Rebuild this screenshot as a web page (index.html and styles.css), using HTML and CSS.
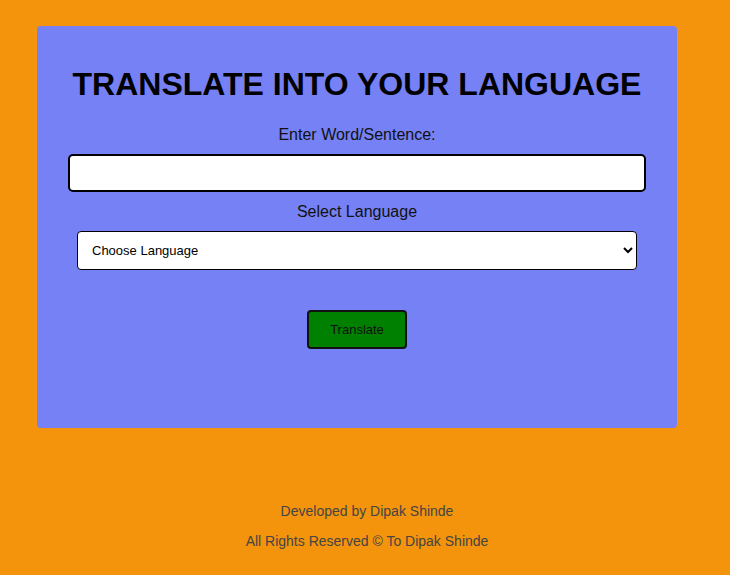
FILE: index.html
```html
<!DOCTYPE html>
<html lang="en">
<head>
<meta charset="utf-8">
<title>Translate</title>
<link rel="stylesheet" href="styles.css">
</head>
<body>
  <main class="card">
    <h1 class="title">TRANSLATE INTO YOUR LANGUAGE</h1>
    <label class="label label-word" for="word">Enter Word/Sentence:</label>
    <input class="text-input" id="word" type="text">
    <label class="label label-lang" for="lang">Select Language</label>
    <select class="lang-select" id="lang">
      <option>Choose Language</option>
      <option>Hindi</option>
      <option>Marathi</option>
    </select>
    <button class="translate-btn" type="button">Translate</button>
  </main>
  <footer class="footer">
    <p class="footer-line">Developed by Dipak Shinde</p>
    <p class="footer-line">All Rights Reserved © To Dipak Shinde</p>
  </footer>
</body>
</html>
```

FILE: styles.css
```css
html, body {
  margin: 0;
  padding: 0;
}
body {
  background: #f3940c;
  font-family: "Liberation Sans", Arial, sans-serif;
  min-height: 575px;
}
.card {
  box-sizing: border-box;
  width: 640px;
  height: 402px;
  margin: 26px 0 0 37px;
  padding-top: 38px;
  background: #7581f5;
  border-radius: 4px;
  display: flex;
  flex-direction: column;
  align-items: center;
}
.title {
  margin: 0;
  font-size: 32px;
  line-height: 40px;
  font-weight: bold;
  color: #000;
}
.label {
  display: block;
  font-size: 16px;
  line-height: 18px;
  color: #111;
}
.label-word {
  margin-top: 22px;
}
.text-input {
  box-sizing: border-box;
  width: 578px;
  height: 38px;
  margin-top: 10px;
  border: 2px solid #000;
  border-radius: 5px;
  background: #fff;
  padding: 0 8px;
  font-size: 16px;
  font-family: inherit;
}
.label-lang {
  margin-top: 11px;
}
.lang-select {
  box-sizing: border-box;
  width: 560px;
  height: 39px;
  margin-top: 10px;
  border: 1px solid #000;
  border-radius: 4px;
  background: #fff;
  padding: 0 10px;
  font-size: 13px;
  font-family: "Liberation Sans", Arial, sans-serif;
  color: #000;
}
.translate-btn {
  box-sizing: border-box;
  width: 100px;
  height: 39px;
  margin-top: 40px;
  background: #008000;
  border: 2px solid #111;
  border-radius: 4px;
  font-family: "Liberation Sans", Arial, sans-serif;
  font-size: 13px;
  color: #111;
}
.footer {
  margin-top: 75px;
  padding-left: 4px;
  text-align: center;
}
.footer-line {
  margin: 0 0 14px;
  font-size: 14px;
  line-height: 16px;
  color: #444;
}
```
